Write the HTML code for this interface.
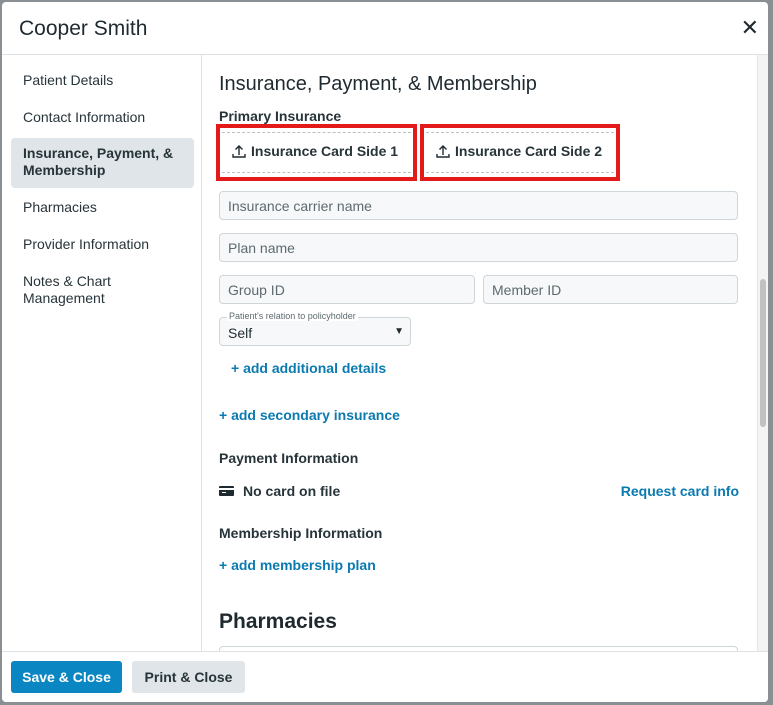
<!DOCTYPE html>
<html><head><style>
*{box-sizing:border-box;margin:0;padding:0}
body{width:773px;height:705px;background:#8a8f93;font-family:"Liberation Sans",sans-serif;color:#1f2a30;position:relative;overflow:hidden}
.modal{position:absolute;left:2px;top:2px;width:766px;height:700px;background:#fff;border-radius:4px;overflow:hidden}
.hdr{position:absolute;left:0;top:0;width:100%;height:53px;border-bottom:1px solid #dde2e5}
.hdr h1{position:absolute;left:17px;top:15px;font-size:21px;font-weight:normal;color:#1f2a30}
.x{position:absolute;right:9px;top:13px;font-size:22px;font-weight:300}
.side{position:absolute;left:0;top:53px;width:200px;height:597px;border-right:1px solid #dde2e5}
.side div{position:absolute;left:9px;width:183px;padding:0 12px;font-size:14px;color:#27343a;line-height:17px}
.side .act{background:#dfe5e8;border-radius:4px;height:50px;padding-top:7px;font-weight:bold}
.main{position:absolute;left:217px;top:53px;width:520px;height:597px}
.a{position:absolute}
h2{font-size:20px;font-weight:normal}
.lbl{font-size:14px;color:#27343a;font-weight:bold}
.inp{position:absolute;height:29px;border:1px solid #cfd6da;border-radius:4px;background:#f6f8f9;font-size:14px;color:#5d6a70;padding:6px 8px}
.link{color:#0a7ab0;font-size:14px;font-weight:bold}
.red{position:absolute;border:4px solid #e21a1a}
.dash{position:absolute;left:2px;right:2px;top:4px;bottom:4px;border-top:1px dashed #b8c1c6;border-bottom:1px dashed #b8c1c6;font-size:14px;padding-top:10px;padding-left:10px;font-weight:bold;color:#27343a}
.dash svg{vertical-align:-2px;margin-right:5px}
.foot{position:absolute;left:0;top:649px;width:100%;height:51px;border-top:1px solid #dde2e5;background:#fff}
.btn{position:absolute;top:9px;height:32px;border-radius:3px;font-size:14px;font-weight:bold;line-height:32px;text-align:center}
.sb{position:absolute;left:755px;top:53px;width:11px;height:597px;background:#f4f4f4;border-left:1px solid #e6e6e6}
.thumb{position:absolute;left:2px;top:224px;width:6px;height:148px;background:#c1c1c1;border-radius:3px}
</style></head><body>
<div class="modal">
<div class="hdr"><h1>Cooper Smith</h1><div class="x">✕</div></div>
<div class="side">
<div style="top:17px">Patient Details</div>
<div style="top:54px">Contact Information</div>
<div class="act" style="top:83px">Insurance, Payment, &amp;<br>Membership</div>
<div style="top:144px">Pharmacies</div>
<div style="top:181px">Provider Information</div>
<div style="top:218px">Notes &amp; Chart<br>Management</div>
</div>
<div class="main">
<h2 class="a" style="left:0;top:18px">Insurance, Payment, &amp; Membership</h2>
<div class="a lbl" style="left:0;top:53px">Primary Insurance</div>
<div class="red" style="left:-3px;top:69px;width:201px;height:57px"><div class="dash"><svg width="14" height="14" viewBox="0 0 14 14" fill="none" stroke="#1f2a30" stroke-width="1.4"><path d="M7 11V2M3.5 5.5L7 2l3.5 3.5M1 10v3h12v-3"/></svg>Insurance Card Side 1</div></div>
<div class="red" style="left:201px;top:69px;width:200px;height:57px"><div class="dash"><svg width="14" height="14" viewBox="0 0 14 14" fill="none" stroke="#1f2a30" stroke-width="1.4"><path d="M7 11V2M3.5 5.5L7 2l3.5 3.5M1 10v3h12v-3"/></svg>Insurance Card Side 2</div></div>
<div class="inp" style="left:0;top:136px;width:519px">Insurance carrier name</div>
<div class="inp" style="left:0;top:178px;width:519px">Plan name</div>
<div class="inp" style="left:0;top:220px;width:256px">Group ID</div>
<div class="inp" style="left:264px;top:220px;width:255px">Member ID</div>
<div class="inp" style="left:0;top:262px;width:192px;color:#1f2a30;padding-top:7px">Self<span style="position:absolute;right:6px;top:8px;font-size:10px">▼</span></div>
<div class="a" style="left:8px;top:256px;font-size:9px;color:#5d6a70;background:#fff;padding:0 2px">Patient's relation to policyholder</div>
<div class="a link" style="left:12px;top:305px">+ add additional details</div>
<div class="a link" style="left:0;top:352px">+ add secondary insurance</div>
<div class="a lbl" style="left:0;top:395px">Payment Information</div>
<div class="a" style="left:0;top:431px;width:15px;height:10px;background:#1f2a30;border-radius:1px"><div style="position:absolute;left:0;top:2px;width:15px;height:2px;background:#fff"></div><div style="position:absolute;left:3px;top:6px;width:4px;height:1px;background:#fff"></div></div>
<div class="a lbl" style="left:24px;top:428px">No card on file</div>
<div class="a link" style="right:0;top:428px">Request card info</div>
<div class="a lbl" style="left:0;top:470px">Membership Information</div>
<div class="a link" style="left:0;top:502px">+ add membership plan</div>
<h2 class="a" style="left:0;top:555px;font-size:21px;font-weight:bold">Pharmacies</h2>
<div class="a" style="left:0;top:591px;width:519px;height:20px;border:1px solid #cfd6da;border-radius:4px"></div>
</div>
<div class="sb"><div class="thumb"></div></div>
<div class="foot">
<div class="btn" style="left:9px;width:111px;background:#0a87c2;color:#fff">Save &amp; Close</div>
<div class="btn" style="left:130px;width:113px;background:#dfe5e8;color:#27343a">Print &amp; Close</div>
</div>
</div>
</body></html>
